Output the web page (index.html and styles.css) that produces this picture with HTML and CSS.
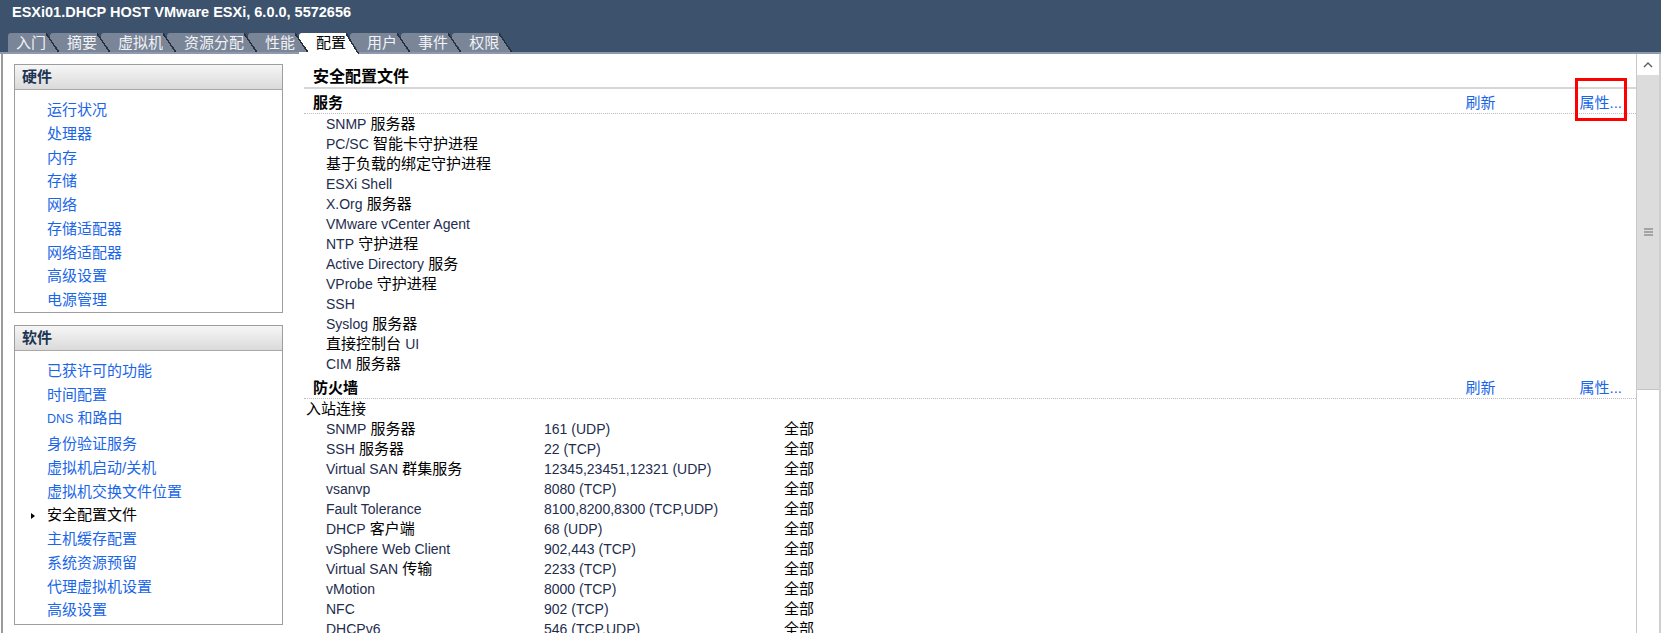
FILE: index.html
```html
<!DOCTYPE html>
<html lang="zh-CN">
<head>
    <meta charset="UTF-8">
    <meta name="viewport" content="width=device-width, initial-scale=1.0">
    <title>ESXi01 - 配置 - 安全配置文件</title>
    <link rel="stylesheet" href="styles.css">
</head>
<body>

<div class="titlebar">
    <h1 class="host-title">ESXi01.DHCP HOST VMware ESXi, 6.0.0, 5572656</h1>
    <div class="tabs">
        <span class="tab">入门</span>
        <span class="tab">摘要</span>
        <span class="tab">虚拟机</span>
        <span class="tab">资源分配</span>
        <span class="tab">性能</span>
        <span class="tab active">配置</span>
        <span class="tab">用户</span>
        <span class="tab">事件</span>
        <span class="tab">权限</span>
    </div>
</div>

<div class="workspace">
    <aside class="sidebar">
        <div class="panel">
            <div class="panel-head">硬件</div>
            <ul class="nav">
                <li><a href="#">运行状况</a></li>
                <li><a href="#">处理器</a></li>
                <li><a href="#">内存</a></li>
                <li><a href="#">存储</a></li>
                <li><a href="#">网络</a></li>
                <li><a href="#">存储适配器</a></li>
                <li><a href="#">网络适配器</a></li>
                <li><a href="#">高级设置</a></li>
                <li><a href="#">电源管理</a></li>
            </ul>
        </div>
        <div class="panel">
            <div class="panel-head">软件</div>
            <ul class="nav">
                <li><a href="#">已获许可的功能</a></li>
                <li><a href="#">时间配置</a></li>
                <li><a href="#"><span class="en">DNS</span> 和路由</a></li>
                <li><a href="#">身份验证服务</a></li>
                <li><a href="#">虚拟机启动/关机</a></li>
                <li><a href="#">虚拟机交换文件位置</a></li>
                <li class="current">安全配置文件</li>
                <li><a href="#">主机缓存配置</a></li>
                <li><a href="#">系统资源预留</a></li>
                <li><a href="#">代理虚拟机设置</a></li>
                <li><a href="#">高级设置</a></li>
            </ul>
        </div>
    </aside>

    <main class="content">
        <div class="page-title">安全配置文件</div>

        <!-- services -->
        <div class="section-head">
            <span>服务</span>
            <div class="actions">
                <a href="#">刷新</a>
                <a href="#" class="marked">属性...</a>
            </div>
        </div>
        <ul class="services">
            <li><span class="en">SNMP</span> 服务器</li>
            <li><span class="en">PC/SC</span> 智能卡守护进程</li>
            <li>基于负载的绑定守护进程</li>
            <li><span class="en">ESXi Shell</span></li>
            <li><span class="en">X.Org</span> 服务器</li>
            <li><span class="en">VMware vCenter Agent</span></li>
            <li><span class="en">NTP</span> 守护进程</li>
            <li><span class="en">Active Directory</span> 服务</li>
            <li><span class="en">VProbe</span> 守护进程</li>
            <li><span class="en">SSH</span></li>
            <li><span class="en">Syslog</span> 服务器</li>
            <li>直接控制台 <span class="en">UI</span></li>
            <li><span class="en">CIM</span> 服务器</li>
        </ul>

        <!-- firewall -->
        <div class="section-head">
            <span>防火墙</span>
            <div class="actions">
                <a href="#">刷新</a>
                <a href="#">属性...</a>
            </div>
        </div>
        <div class="subhead">入站连接</div>
        <div class="fw-table">
            <div class="fw-row"><span><span class="en">SNMP</span> 服务器</span><span class="en">161 (UDP)</span><span>全部</span></div>
            <div class="fw-row"><span><span class="en">SSH</span> 服务器</span><span class="en">22 (TCP)</span><span>全部</span></div>
            <div class="fw-row"><span><span class="en">Virtual SAN</span> 群集服务</span><span class="en">12345,23451,12321 (UDP)</span><span>全部</span></div>
            <div class="fw-row"><span class="en">vsanvp</span><span class="en">8080 (TCP)</span><span>全部</span></div>
            <div class="fw-row"><span class="en">Fault Tolerance</span><span class="en">8100,8200,8300 (TCP,UDP)</span><span>全部</span></div>
            <div class="fw-row"><span><span class="en">DHCP</span> 客户端</span><span class="en">68 (UDP)</span><span>全部</span></div>
            <div class="fw-row"><span class="en">vSphere Web Client</span><span class="en">902,443 (TCP)</span><span>全部</span></div>
            <div class="fw-row"><span><span class="en">Virtual SAN</span> 传输</span><span class="en">2233 (TCP)</span><span>全部</span></div>
            <div class="fw-row"><span class="en">vMotion</span><span class="en">8000 (TCP)</span><span>全部</span></div>
            <div class="fw-row"><span class="en">NFC</span><span class="en">902 (TCP)</span><span>全部</span></div>
            <div class="fw-row"><span class="en">DHCPv6</span><span class="en">546 (TCP,UDP)</span><span>全部</span></div>
            <div class="fw-row"><span><span class="en">DNS</span> 客户端</span><span class="en">53 (UDP)</span><span>全部</span></div>
        </div>
    </main>

    <div class="scrollbar">
        <div class="scroll-btn">
            <svg width="10" height="7" viewBox="0 0 10 7"><polyline points="1,6 5,2 9,6" fill="none" stroke="#5f5f5f" stroke-width="1.4"/></svg>
        </div>
        <div class="scroll-thumb">
            <svg width="9" height="8" viewBox="0 0 9 8"><path d="M0 1h9M0 4h9M0 7h9" stroke="#6d6d6d" stroke-width="1"/></svg>
        </div>
    </div>
</div>

</body>
</html>
```

FILE: styles.css
```css
/* Reset */
* {
    margin: 0;
    padding: 0;
    box-sizing: border-box;
}

body {
    font-family: 'Liberation Sans', 'Noto Sans CJK SC', sans-serif;
    font-size: 15px;
    color: #000;
    background: #fff;
    height: 633px;
    overflow: hidden;
}

a {
    color: #1a66e8;
    text-decoration: none;
}

ul {
    list-style: none;
}

.en {
    font-size: 14px;
}

/* Title bar + tabs */
.titlebar {
    background: #3d526c;
    height: 54px;
}

.host-title {
    font-size: 14.5px;
    font-weight: bold;
    color: #fff;
    line-height: 17px;
    padding: 4px 0 0 12px;
}

.tabs {
    display: flex;
    margin-top: 12px;
    padding-left: 8px;
    height: 21px;
    border-bottom: 2px solid #8c99ae;
}

.tab {
    position: relative;
    height: 19px;
    line-height: 19px;
    padding-left: 17px;
    margin-right: 4px;
    font-size: 15px;
    color: #f0f2f6;
    background: #7a8598;
    border-top-left-radius: 3px;
}

.tab:first-child {
    padding-left: 8px;
}

.tab::after {
    content: '';
    position: absolute;
    top: 0;
    right: -13px;
    width: 13px;
    height: 100%;
    background: linear-gradient(to top right, #7a8598 calc(50% - 1px), #26313f calc(50% - 1px), #26313f calc(50% + 0.5px), transparent calc(50% + 0.5px));
}

.tab:nth-child(1) { z-index: 9; }
.tab:nth-child(2) { z-index: 8; }
.tab:nth-child(3) { z-index: 7; }
.tab:nth-child(4) { z-index: 6; }
.tab:nth-child(5) { z-index: 5; }
.tab:nth-child(6) { z-index: 4; }
.tab:nth-child(7) { z-index: 3; }
.tab:nth-child(8) { z-index: 2; }
.tab:nth-child(9) { z-index: 1; }

.tab.active {
    height: 21px;
    color: #000;
    background: #fff;
}

.tab.active::after {
    background: linear-gradient(to top right, #fff calc(50% - 1px), #26313f calc(50% - 1px), #26313f calc(50% + 0.5px), transparent calc(50% + 0.5px));
}

/* Workspace */
.workspace {
    display: flex;
    height: 579px;
    margin-left: 1px;
    border-left: 2px solid #9b9b9b;
    overflow: hidden;
}

/* Sidebar */
.sidebar {
    width: 269px;
    flex-shrink: 0;
    margin-left: 11px;
    padding-top: 10px;
}

.panel {
    border: 1px solid #9d9d9d;
    margin-bottom: 12px;
}

.panel-head {
    height: 25px;
    line-height: 24px;
    padding-left: 7px;
    font-weight: bold;
    color: #1b3452;
    background: linear-gradient(#f6f6f6, #dadada);
    border-bottom: 1px solid #a9a9a9;
}

.nav {
    padding: 8px 0 0 32px;
}

.panel:last-child .nav {
    padding-bottom: 2px;
}

.nav li {
    line-height: 23.75px;
}

.nav .en {
    font-size: 12.5px;
}

.nav .current::before {
    content: '';
    display: inline-block;
    margin-left: -16px;
    margin-right: 12px;
    vertical-align: 1px;
    border-left: 4px solid #000;
    border-top: 3px solid transparent;
    border-bottom: 3px solid transparent;
}

/* Main content */
.content {
    flex: 1;
    min-width: 0;
    margin-left: 21px;
}

.page-title {
    font-size: 16px;
    font-weight: bold;
    line-height: 20px;
    padding: 13px 0 0 9px;
    border-bottom: 2px solid #d6d6d6;
}

.section-head {
    display: flex;
    align-items: flex-end;
    padding: 4px 14px 0 9px;
    line-height: 20px;
    font-weight: bold;
    border-bottom: 1px dotted #bdbdbd;
}

.actions {
    margin-left: auto;
    display: flex;
    gap: 84px;
    font-weight: normal;
}

.marked {
    position: relative;
}

/* red annotation box */
.marked::after {
    content: '';
    position: absolute;
    left: -4px;
    right: -5px;
    top: -15px;
    bottom: -8px;
    border: 3px solid #f00;
}

.services {
    padding-left: 22px;
}

.services li {
    line-height: 20px;
}

.services .en,
.fw-table .en {
    color: #1e2d4e;
}

.subhead {
    padding-left: 2px;
    line-height: 20px;
}

.fw-table {
    padding-left: 22px;
}

.fw-row {
    display: grid;
    grid-template-columns: 218px 240px 1fr;
    line-height: 20px;
}

/* Scrollbar */
.scrollbar {
    width: 25px;
    flex-shrink: 0;
    border-left: 1px solid #c9c9c9;
    border-right: 2px solid #cfcfcf;
    background: #fff;
}

.scroll-btn {
    height: 21px;
    display: flex;
    align-items: center;
    justify-content: center;
}

.scroll-thumb {
    height: 315px;
    background: #dcdcdc;
    border-bottom: 1px solid #c4c4c4;
    display: flex;
    align-items: center;
    justify-content: center;
}
```
